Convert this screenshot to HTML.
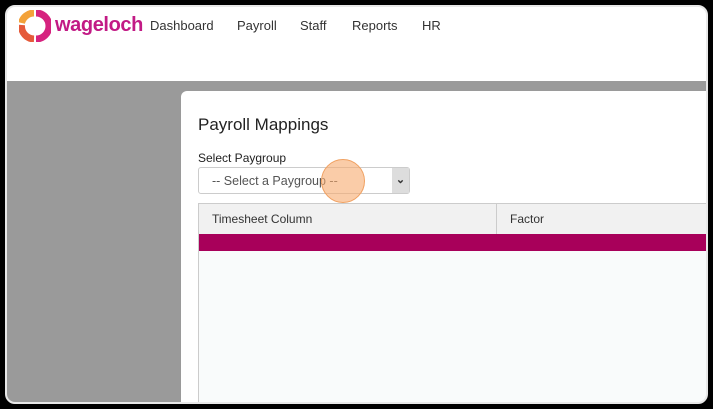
<!DOCTYPE html>
<html><head><style>
*{margin:0;padding:0;box-sizing:border-box}
body{width:713px;height:409px;background:#000;position:relative;overflow:hidden;font-family:"Liberation Sans",sans-serif}
.frame{position:absolute;left:5px;top:5px;width:703px;height:399px;background:#fff;border-radius:10px;overflow:hidden;border:2px solid #e8e8e8}
.nav{position:absolute;top:11px;font-size:13px;color:#333}
.gray{position:absolute;left:0;top:74px;width:700px;height:330px;background:#9a9a9a}
.card{position:absolute;left:174px;top:84px;width:530px;height:311px;background:#fff;border-radius:6px 0 0 0;overflow:hidden}
</style></head><body>
<div class="frame">
 <svg style="position:absolute;left:12px;top:3px" width="32" height="32" viewBox="0 0 32 32">
  <path d="M17 3 A13 13 0 0 1 17 29" fill="none" stroke="#d6237f" stroke-width="7"/>
  <path d="M16 29 L16 3" stroke="#fff" stroke-width="1"/>
  <path d="M15 3 A13 13 0 0 0 2.5 13" fill="none" stroke="#f3a23a" stroke-width="7"/>
  <path d="M2.5 15 A13 13 0 0 0 15 29" fill="none" stroke="#e55a3a" stroke-width="7"/>
 </svg>
 <div style="position:absolute;left:48px;top:7px;font-size:20px;font-weight:bold;color:#c21a85;letter-spacing:-0.4px">wageloch</div>
 <div class="nav" style="left:143px">Dashboard</div>
 <div class="nav" style="left:230px">Payroll</div>
 <div class="nav" style="left:293px">Staff</div>
 <div class="nav" style="left:345px">Reports</div>
 <div class="nav" style="left:415px">HR</div>
 <div class="gray"></div>
 <div class="card">
  <div style="position:absolute;left:17px;top:24px;font-size:17px;color:#222">Payroll Mappings</div>
  <div style="position:absolute;left:17px;top:60px;font-size:12px;color:#222">Select Paygroup</div>
  <div style="position:absolute;left:17px;top:76px;width:212px;height:27px;border:1px solid #ccc;border-radius:3px;font-size:12.5px;color:#555;padding:6px 0 0 13px">-- Select a Paygroup --
   <div style="position:absolute;right:0;top:0;width:17px;height:25px;background:#ddd;font-size:11px;font-weight:bold;text-align:center;padding-top:5px;color:#333">&#8964;</div></div>
  <div style="position:absolute;left:140px;top:68px;width:44px;height:44px;border-radius:50%;background:rgba(247,170,110,0.6);border:1px solid #f0a060"></div>
  <div style="position:absolute;left:17px;top:112px;width:520px;height:210px;border:1px solid #ccc;background:#f9fbfb">
   <div style="height:30px;background:#f1f1f1;font-size:12px;color:#333;position:relative">
    <span style="position:absolute;left:13px;top:8px">Timesheet Column</span>
    <div style="position:absolute;left:297px;top:0;width:1px;height:30px;background:#ccc"></div>
    <span style="position:absolute;left:311px;top:8px">Factor</span></div>
   <div style="height:17px;background:#a8005a"></div>
  </div>
 </div>
</div>
</body></html>
